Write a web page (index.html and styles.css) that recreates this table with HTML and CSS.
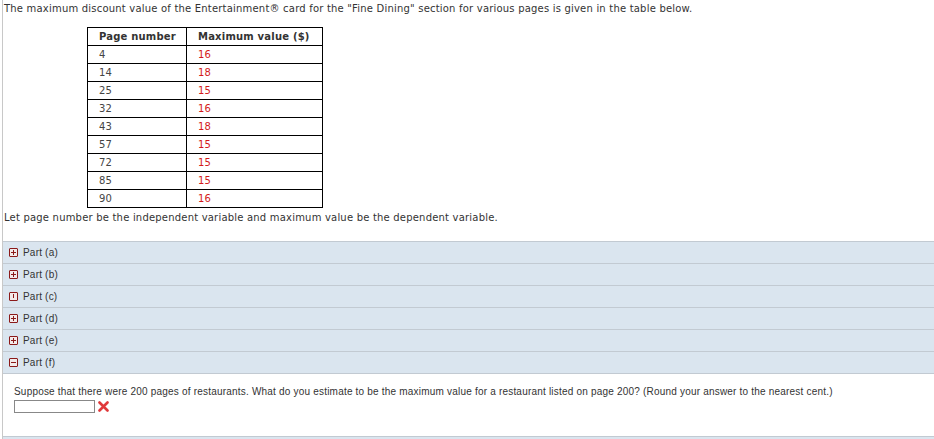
FILE: index.html
```html
<!DOCTYPE html>
<html>
<head>
<meta charset="utf-8">
<link rel="stylesheet" href="styles.css">
</head>
<body>
<div class="page">
  <p class="intro">The maximum discount value of the Entertainment® card for the "Fine Dining" section for various pages is given in the table below.</p>
  <table class="data">
    <thead>
      <tr><th>Page number</th><th>Maximum value ($)</th></tr>
    </thead>
    <tbody>
      <tr><td>4</td><td class="val">16</td></tr>
      <tr><td>14</td><td class="val">18</td></tr>
      <tr><td>25</td><td class="val">15</td></tr>
      <tr><td>32</td><td class="val">16</td></tr>
      <tr><td>43</td><td class="val">18</td></tr>
      <tr><td>57</td><td class="val">15</td></tr>
      <tr><td>72</td><td class="val">15</td></tr>
      <tr><td>85</td><td class="val">15</td></tr>
      <tr><td>90</td><td class="val">16</td></tr>
    </tbody>
  </table>
  <p class="note">Let page number be the independent variable and maximum value be the dependent variable.</p>

  <div class="parts">
    <div class="part"><span class="tog plus"></span>Part (a)</div>
    <div class="part"><span class="tog plus"></span>Part (b)</div>
    <div class="part"><span class="tog info"></span>Part (c)</div>
    <div class="part"><span class="tog plus"></span>Part (d)</div>
    <div class="part"><span class="tog plus"></span>Part (e)</div>
    <div class="part"><span class="tog minus"></span>Part (f)</div>
    <div class="answer">
      <p class="q">Suppose that there were 200 pages of restaurants. What do you estimate to be the maximum value for a restaurant listed on page 200? (Round your answer to the nearest cent.)</p>
      <div class="resp">
        <span class="box"></span>
        <svg class="x" width="11" height="11" viewBox="0 0 11 11"><path d="M1.5 1.5 L9.5 9.5 M9.5 1.5 L1.5 9.5" stroke="#e0393b" stroke-width="2.6" stroke-linecap="round"/></svg>
      </div>
    </div>
    <div class="foot"></div>
  </div>
</div>
</body>
</html>
```
FILE: styles.css
```css
html, body {
  margin: 0;
  padding: 0;
  background: #fff;
}
.page {
  margin-left: 2px;
  border-left: 1px solid #c8c8c8;
  min-height: 439px;
  font-family: "DejaVu Sans", Verdana, sans-serif;
  font-size: 10px;
  letter-spacing: 0.2px;
  color: #333;
}
.intro {
  margin: 0;
  padding: 3px 0 0 1px;
  line-height: 12px;
}
.data {
  border-collapse: collapse;
  margin: 12px 0 0 84px;
  font-size: 10px;
}
.data th, .data td {
  border: 1px solid #000;
  height: 17px;
  padding: 0 0 0 11px;
  text-align: left;
  line-height: 12px;
  color: #444;
}
.data th {
  font-weight: bold;
  color: #333;
}
.data th:first-child, .data td:first-child { width: 87px; }
.data th:last-child, .data td:last-child { width: 124px; }
.data td.val { color: #d41a1a; }
.note {
  margin: 4px 0 0 1px;
  line-height: 12px;
}
.parts {
  margin-top: 17px;
  background: #dae5ef;
  border-top: 1px solid #c2cad2;
  font-family: "Liberation Sans", Arial, sans-serif;
  font-size: 10px;
  letter-spacing: 0.2px;
  color: #333;
}
.part {
  height: 21px;
  border-bottom: 1px solid #c2cad2;
  display: flex;
  align-items: center;
  padding-left: 6px;
  gap: 5px;
}
.part:last-of-type { border-bottom: none; }
.tog {
  width: 9px;
  height: 9px;
  border: 1px solid #8b1a1a;
  border-radius: 1px;
  box-sizing: border-box;
  background: #f3eaea;
  position: relative;
}
.tog::before, .tog::after {
  content: "";
  position: absolute;
  background: #8b1a1a;
}
.tog.plus::before, .tog.minus::before {
  left: 1px; right: 1px; top: 3px; height: 1px;
}
.tog.plus::after {
  top: 1px; bottom: 1px; left: 3px; width: 1px;
}
.tog.info::before {
  top: 1px; bottom: 2px; left: 3px; width: 1px;
}
.tog.minus::after { display: none; }
.tog.info::after { display: none; }
.answer {
  background: #fff;
  height: 63px;
  padding: 12px 0 0 11px;
  box-sizing: border-box;
  border-bottom: 1px solid #c2cad2;
}
.q {
  margin: 0;
  line-height: 12px;
}
.resp {
  display: flex;
  align-items: center;
  gap: 3px;
  margin-top: 2px;
}
.box {
  width: 81px;
  height: 13px;
  border: 1px solid #888;
  box-sizing: border-box;
  background: #fff;
}
.x { display: block; }
.foot {
  height: 4px;
  background: #dae5ef;
}
```
